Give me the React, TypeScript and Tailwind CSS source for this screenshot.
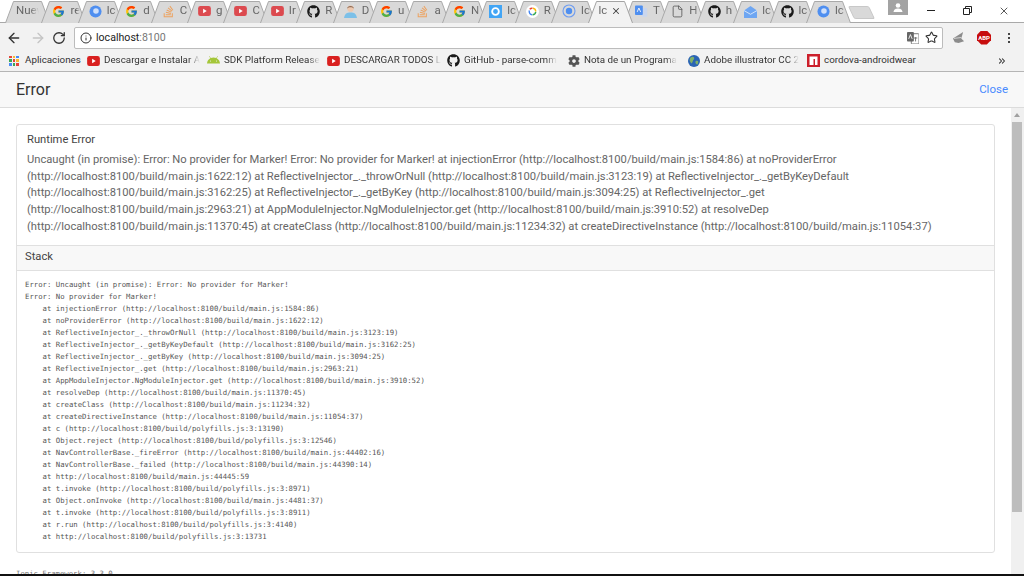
import { ArrowLeft, ArrowRight, ChevronsRight, File, Info, RotateCw, Star, X } from "lucide-react";
import { FaAndroid, FaCog, FaGithub, FaStackOverflow } from "react-icons/fa";
import { FcGoogle } from "react-icons/fc";
import type { ReactNode } from "react";

const messageLines = [
  "Uncaught (in promise): Error: No provider for Marker! Error: No provider for Marker! at injectionError (http://localhost:8100/build/main.js:1584:86) at noProviderError",
  "(http://localhost:8100/build/main.js:1622:12) at ReflectiveInjector_._throwOrNull (http://localhost:8100/build/main.js:3123:19) at ReflectiveInjector_._getByKeyDefault",
  "(http://localhost:8100/build/main.js:3162:25) at ReflectiveInjector_._getByKey (http://localhost:8100/build/main.js:3094:25) at ReflectiveInjector_.get",
  "(http://localhost:8100/build/main.js:2963:21) at AppModuleInjector.NgModuleInjector.get (http://localhost:8100/build/main.js:3910:52) at resolveDep",
  "(http://localhost:8100/build/main.js:11370:45) at createClass (http://localhost:8100/build/main.js:11234:32) at createDirectiveInstance (http://localhost:8100/build/main.js:11054:37)",
];

const stack = `Error: Uncaught (in promise): Error: No provider for Marker!
Error: No provider for Marker!
    at injectionError (http://localhost:8100/build/main.js:1584:86)
    at noProviderError (http://localhost:8100/build/main.js:1622:12)
    at ReflectiveInjector_._throwOrNull (http://localhost:8100/build/main.js:3123:19)
    at ReflectiveInjector_._getByKeyDefault (http://localhost:8100/build/main.js:3162:25)
    at ReflectiveInjector_._getByKey (http://localhost:8100/build/main.js:3094:25)
    at ReflectiveInjector_.get (http://localhost:8100/build/main.js:2963:21)
    at AppModuleInjector.NgModuleInjector.get (http://localhost:8100/build/main.js:3910:52)
    at resolveDep (http://localhost:8100/build/main.js:11370:45)
    at createClass (http://localhost:8100/build/main.js:11234:32)
    at createDirectiveInstance (http://localhost:8100/build/main.js:11054:37)
    at c (http://localhost:8100/build/polyfills.js:3:13190)
    at Object.reject (http://localhost:8100/build/polyfills.js:3:12546)
    at NavControllerBase._fireError (http://localhost:8100/build/main.js:44402:16)
    at NavControllerBase._failed (http://localhost:8100/build/main.js:44390:14)
    at http://localhost:8100/build/main.js:44445:59
    at t.invoke (http://localhost:8100/build/polyfills.js:3:8971)
    at Object.onInvoke (http://localhost:8100/build/main.js:4481:37)
    at t.invoke (http://localhost:8100/build/polyfills.js:3:8911)
    at r.run (http://localhost:8100/build/polyfills.js:3:4140)
    at http://localhost:8100/build/polyfills.js:3:13731`;

function YouTube({ pale }: { pale?: boolean }) {
  return (
    <svg viewBox="0 0 14 11" className="h-[10px] w-[13px] shrink-0">
      <rect width="14" height="11" rx="2.5" fill={pale ? "#dc4a4f" : "#d9201f"} />
      <path d="M5.5 3 L9.5 5.5 L5.5 8 Z" fill="#fff" />
    </svg>
  );
}

function BlueBlob() {
  return (
    <svg viewBox="0 0 14 14" className="h-[13px] w-[13px] shrink-0">
      <circle cx="7" cy="7" r="6.5" fill="#4f8ff0" />
      <circle cx="7.5" cy="6.5" r="3" fill="#cfe0fb" />
    </svg>
  );
}

function BoxIcon() {
  return (
    <svg viewBox="0 0 14 14" className="h-[13px] w-[13px] shrink-0">
      <rect width="14" height="14" fill="#42a5f5" />
      <circle cx="7" cy="7" r="3.6" fill="none" stroke="#fff" strokeWidth="2" />
    </svg>
  );
}

function RingIcon() {
  return (
    <svg viewBox="0 0 14 14" className="h-[14px] w-[14px] shrink-0">
      <circle cx="7" cy="7" r="6" fill="none" stroke="#6f9df0" strokeWidth="1.1" />
      <circle cx="7" cy="7" r="3.2" fill="#4f8ff0" />
    </svg>
  );
}

function ColorRing() {
  return (
    <svg viewBox="0 0 14 14" className="h-[13px] w-[13px] shrink-0">
      <circle cx="7" cy="7" r="7" fill="#fff" />
      <path d="M4 4.5 A3.5 3.5 0 0 1 7 3.5" fill="none" stroke="#ea4335" strokeWidth="1.5" />
      <path d="M7.5 3.5 A3.5 3.5 0 0 1 10.5 7" fill="none" stroke="#fbbc05" strokeWidth="1.5" />
      <path d="M10.5 7.5 A3.5 3.5 0 0 1 7 10.5" fill="none" stroke="#34a853" strokeWidth="1.5" />
      <path d="M6.5 10.5 A3.5 3.5 0 0 1 3.6 6" fill="none" stroke="#4285f4" strokeWidth="1.5" />
    </svg>
  );
}

function Avatar() {
  return (
    <svg viewBox="0 0 14 15" className="h-[14px] w-[13px] shrink-0">
      <path d="M0 15 C1 10 3 9 7 9 C11 9 13 10 14 15 Z" fill="#7cc0e8" />
      <circle cx="7" cy="5" r="3.4" fill="#eec8ae" />
      <path d="M3.5 5 C3 1 11 1 10.5 5 C9 3 5 3 3.5 5 Z" fill="#8a6a55" />
    </svg>
  );
}

function TranslateTab() {
  return (
    <svg viewBox="0 0 15 14" className="h-[13px] w-[13px] shrink-0">
      <path d="M6 3 H14 V13 H8 Z" fill="#c9d6ee" />
      <rect width="9" height="11" rx="1" fill="#4f8ff0" />
      <path d="M2.5 7.5 L4.5 3 L6.5 7.5" fill="none" stroke="#fff" strokeWidth="1" />
    </svg>
  );
}

function MailIcon() {
  return (
    <svg viewBox="0 0 14 14" className="h-[13px] w-[13px] shrink-0">
      <path d="M0 6 L7 1 L14 6 V14 H0 Z" fill="#6ea6f2" />
      <path d="M0 6 L7 10 L14 6" fill="none" stroke="#dce9fb" strokeWidth="1" />
    </svg>
  );
}

function TabShape({ active }: { active?: boolean }) {
  return (
    <svg viewBox="0 0 45 23" className="absolute inset-0 h-[23px] w-[45px]">
      <path
        d="M0.5 23 L8.5 1.5 H36.5 L44.5 23"
        fill={active ? "#f2f2f2" : "#d9d9d9"}
        stroke={active ? "#a4a4a4" : "#a9a9a9"}
        strokeWidth="1"
      />
    </svg>
  );
}

function Tab({ icon, title, active }: { icon?: ReactNode; title: string; active?: boolean }) {
  return (
    <div className={`relative -mr-[8.6px] h-[23px] w-[45px] shrink-0 ${active ? "z-10" : ""}`}>
      <TabShape active={active} />
      <div className="relative flex h-[23px] items-center gap-[5px] pb-[1px] pl-[11px]">
        {icon}
        <span
          className={`overflow-hidden whitespace-nowrap text-[11.5px] text-[#666] [mask-image:linear-gradient(to_right,black_60%,transparent)] ${
            icon || active ? "w-[10px]" : "w-[23px]"
          }`}
        >
          {title}
        </span>
        {active && <X className="-ml-[3px] h-[10px] w-[10px] shrink-0 text-[#444]" strokeWidth={2.5} />}
      </div>
    </div>
  );
}

function Bookmark({ icon, label, width, fade }: { icon: ReactNode; label: string; width: string; fade?: boolean }) {
  return (
    <div className={`flex shrink-0 items-center gap-[4px] ${width}`}>
      {icon}
      <span
        className={`whitespace-nowrap text-[9.8px] text-[#333] ${
          fade ? "[mask-image:linear-gradient(to_right,black_88%,transparent)]" : ""
        }`}
      >
        {label}
      </span>
    </div>
  );
}

function AppsGrid() {
  const cells = ["bg-[#e8453c]", "bg-[#f9bb2d]", "bg-[#4a8af4]", "bg-[#3aa757]", "bg-[#e8453c]", "bg-[#f9bb2d]", "bg-[#4a8af4]", "bg-[#3aa757]", "bg-[#e8453c]"];
  return (
    <div className="mr-[2px] grid h-[10px] w-[10px] shrink-0 grid-cols-3 gap-[1px]">
      {cells.map((c, i) => (
        <span key={i} className={c} />
      ))}
    </div>
  );
}

function Globe() {
  return (
    <svg viewBox="0 0 14 14" className="h-[12px] w-[12px] shrink-0">
      <circle cx="7" cy="7" r="7" fill="#2a64b4" />
      <path d="M3 3 C6 1 8 3 7 5 C5 6 6 9 4 10 C2 8 1 5 3 3 Z M9 7 C12 6 13 8 11 11 C9 11 8 9 9 7 Z" fill="#7fb069" />
    </svg>
  );
}

function RedSquare() {
  return (
    <svg viewBox="0 0 13 13" className="h-[13px] w-[13px] shrink-0">
      <rect width="13" height="13" fill="#cc1f2b" />
      <path d="M2.5 11 V2.5 H10.5 V11 H8 V5 H6.5 V11 Z" fill="#fff" />
    </svg>
  );
}

function TranslateButton() {
  return (
    <svg viewBox="0 0 14 14" className="h-[12px] w-[12px]">
      <rect x="5" y="2" width="9" height="12" rx="1" fill="#fff" stroke="#666" />
      <rect width="8" height="11" rx="1" fill="#666" />
      <path d="M2 8 L4 3 L6 8" fill="none" stroke="#fff" strokeWidth="1" />
      <path d="M8 7 H12 M10 6 V11" stroke="#666" strokeWidth="1" />
    </svg>
  );
}

function Extension() {
  return (
    <svg viewBox="0 0 14 14" className="h-[13px] w-[13px]">
      <path d="M1 8 L12 1 L10 8 L13 11 L7 13 L3 12 Z" fill="#8c8c8c" />
      <path d="M2 8 L10 7" stroke="#d8d8d8" strokeWidth="1" />
    </svg>
  );
}

function Abp() {
  return (
    <div className="flex h-[14px] w-[14px] items-center justify-center bg-[#c70d0d] text-[6px] font-bold text-white [clip-path:polygon(30%_0,70%_0,100%_30%,100%_70%,70%_100%,30%_100%,0_70%,0_30%)]">
      ABP
    </div>
  );
}

function WindowControls() {
  return (
    <div className="ml-auto flex h-[21px] items-start">
      <div className="flex h-[15px] w-[20px] items-center justify-center bg-[#a3a3a3]">
        <svg viewBox="0 0 10 9" className="h-[9px] w-[10px]">
          <circle cx="5" cy="2.5" r="2.3" fill="#fff" />
          <path d="M0.5 9 C1 6 3 5.5 5 5.5 C7 5.5 9 6 9.5 9 Z" fill="#fff" />
        </svg>
      </div>
      <div className="ml-[5px] flex h-[21px] w-[36px] items-center justify-center">
        <span className="h-[1.5px] w-[8px] bg-[#222]" />
      </div>
      <div className="flex h-[21px] w-[36px] items-center justify-center">
        <svg viewBox="0 0 9 9" className="h-[9px] w-[9px]">
          <path d="M2.5 2.5 V0.5 H8.5 V6.5 H6.5 M0.5 2.5 H6.5 V8.5 H0.5 Z" fill="none" stroke="#222" strokeWidth="1" />
        </svg>
      </div>
      <div className="mr-[1px] flex h-[21px] w-[38px] items-center justify-center">
        <X className="h-[12px] w-[12px] text-[#222]" strokeWidth={1.5} />
      </div>
    </div>
  );
}

export default function App() {
  return (
    <div className="flex h-[576px] w-[1024px] flex-col overflow-hidden bg-white font-['Roboto',sans-serif]">
      {/* Tab strip */}
      <div className="relative flex h-[23px] shrink-0 items-start border-b border-[#a9a9a9] bg-white pl-[5px]">
        <Tab title="Nuev" />
        <Tab title="re" icon={<FcGoogle className="h-[13px] w-[13px] shrink-0" />} />
        <Tab title="lc" icon={<BlueBlob />} />
        <Tab title="d" icon={<FcGoogle className="h-[13px] w-[13px] shrink-0" />} />
        <Tab title="C" icon={<FaStackOverflow className="h-[13px] w-[13px] shrink-0 text-[#eda25f]" />} />
        <Tab title="g" icon={<YouTube pale />} />
        <Tab title="C" icon={<YouTube pale />} />
        <Tab title="Ir" icon={<YouTube pale />} />
        <Tab title="R" icon={<FaGithub className="h-[13px] w-[13px] shrink-0 text-[#1a1a1a]" />} />
        <Tab title="D" icon={<Avatar />} />
        <Tab title="u" icon={<FcGoogle className="h-[13px] w-[13px] shrink-0" />} />
        <Tab title="a" icon={<FaStackOverflow className="h-[13px] w-[13px] shrink-0 text-[#eda25f]" />} />
        <Tab title="N" icon={<FcGoogle className="h-[13px] w-[13px] shrink-0" />} />
        <Tab title="lc" icon={<BoxIcon />} />
        <Tab title="R" icon={<ColorRing />} />
        <Tab title="lc" icon={<RingIcon />} />
        <Tab title="lc" active />
        <Tab title="T" icon={<TranslateTab />} />
        <Tab title="H" icon={<File className="h-[13px] w-[13px] shrink-0 text-[#555]" strokeWidth={1.5} />} />
        <Tab title="h" icon={<FaGithub className="h-[13px] w-[13px] shrink-0 text-[#1a1a1a]" />} />
        <Tab title="lc" icon={<MailIcon />} />
        <Tab title="lc" icon={<FaGithub className="h-[13px] w-[13px] shrink-0 text-[#1a1a1a]" />} />
        <Tab title="lc" icon={<BlueBlob />} />
        <div className="ml-[9px] mt-[6px] h-[13px] w-[21px] shrink-0 skew-x-[25deg] rounded-[2px] border border-[#c8c8c8] bg-[#d9d9d9]" />
        <WindowControls />
      </div>

      {/* Toolbar */}
      <div className="flex h-[26px] shrink-0 items-center bg-[#f2f2f2] pl-[6px] pr-[9px] pt-[3px]">
        <ArrowLeft className="h-[16px] w-[16px] text-[#333]" strokeWidth={2} />
        <ArrowRight className="ml-[8px] h-[16px] w-[16px] text-[#c4c4c4]" strokeWidth={2} />
        <RotateCw className="ml-[6px] h-[14px] w-[14px] text-[#333]" strokeWidth={2.2} />
        <div className="ml-[8px] flex h-[22px] w-[869px] items-center rounded-[2px] border border-[#bcbcbc] bg-white pl-[5px] pr-[4px]">
          <Info className="h-[12px] w-[12px] text-[#333]" strokeWidth={2} />
          <span className="ml-[4px] text-[10.6px] text-[#222]">
            localhost<span className="text-[#777]">:8100</span>
          </span>
          <div className="ml-auto flex items-center gap-[6px]">
            <TranslateButton />
            <Star className="h-[13px] w-[13px] text-[#333]" strokeWidth={2} />
          </div>
        </div>
        <div className="ml-[9px]">
          <Extension />
        </div>
        <div className="ml-[12px]">
          <Abp />
        </div>
        <div className="ml-[17px] flex flex-col gap-[2px]">
          <span className="h-[2px] w-[2px] bg-[#444]" />
          <span className="h-[2px] w-[2px] bg-[#444]" />
          <span className="h-[2px] w-[2px] bg-[#444]" />
        </div>
      </div>

      {/* Bookmarks bar */}
      <div className="flex h-[23px] shrink-0 items-center border-b border-[#b5b5b5] bg-[#f2f2f2] pl-[9px] pt-[1px]">
        <Bookmark width="w-[78px]" icon={<AppsGrid />} label="Aplicaciones" />
        <Bookmark width="w-[120px]" fade icon={<YouTube />} label="Descargar e Instalar A" />
        <Bookmark width="w-[120px]" fade icon={<FaAndroid className="h-[13px] w-[13px] shrink-0 text-[#a4c639]" />} label="SDK Platform Release" />
        <Bookmark width="w-[120px]" fade icon={<YouTube />} label="DESCARGAR TODOS L" />
        <Bookmark width="w-[121px]" fade icon={<FaGithub className="h-[13px] w-[13px] shrink-0 text-[#1a1a1a]" />} label="GitHub - parse-comm" />
        <Bookmark width="w-[120px]" fade icon={<FaCog className="h-[12px] w-[12px] shrink-0 text-[#555]" />} label="Nota de un Programa" />
        <Bookmark width="w-[119px]" fade icon={<Globe />} label="Adobe illustrator CC 2" />
        <Bookmark width="w-[120px]" icon={<RedSquare />} label="cordova-androidwear" />
        <ChevronsRight className="ml-[70px] h-[10px] w-[10px] text-[#333]" strokeWidth={2.5} />
      </div>

      {/* Error header */}
      <div className="flex h-[36px] shrink-0 items-center justify-between border-b border-[#dcdcdc] bg-[#f8f8f8] px-[16px] pt-[1px]">
        <span className="text-[16px] text-[#333]">Error</span>
        <span className="text-[11.5px] text-[#488aff]">Close</span>
      </div>

      <div className="flex min-h-0 flex-1">
        <div className="min-w-0 flex-1 overflow-hidden">
          <div className="mx-[16px] mt-[16px] rounded-[3px] border border-[#e0e0e0]">
            <div className="px-[10px] pb-[7px] pt-[7px]">
              <div className="text-[11.2px] leading-[15px] text-[#444]">Runtime Error</div>
              <div className="mt-[5px] pb-[2px] text-[11.2px] leading-[16.7px] text-[#666]">
                {messageLines.map((line) => (
                  <div key={line} className="whitespace-nowrap">
                    {line}
                  </div>
                ))}
              </div>
            </div>
            <div className="flex h-[26px] items-center border-y border-[#e0e0e0] bg-[#f8f8f8] pl-[8px] text-[11.2px] text-[#444]">
              Stack
            </div>
            <pre className="px-[8px] pb-[9px] pt-[8px] font-['DejaVu_Sans_Mono',monospace] text-[7.3px] leading-[12px] text-[#555]">
              {stack}
            </pre>
          </div>
          <div className="ml-[16px] mt-[15px] whitespace-nowrap font-['DejaVu_Sans_Mono',monospace] text-[7.3px] leading-[12px] text-[#777]">
            Ionic Framework: 3.3.0
          </div>
        </div>

        {/* Scrollbar */}
        <div className="flex w-[13px] shrink-0 flex-col bg-[#f0f0f0] pl-[1px] pr-[2px]">
          <div className="flex h-[14px] shrink-0 items-center justify-center">
            <span className="h-0 w-0 border-x-[3px] border-b-[4px] border-x-transparent border-b-[#a0a0a0]" />
          </div>
          <div className="h-[390px] bg-[#bdbdbd]" />
        </div>
      </div>

      {/* Taskbar sliver */}
      <div className="h-[2px] shrink-0 bg-[#111]" />
    </div>
  );
}
